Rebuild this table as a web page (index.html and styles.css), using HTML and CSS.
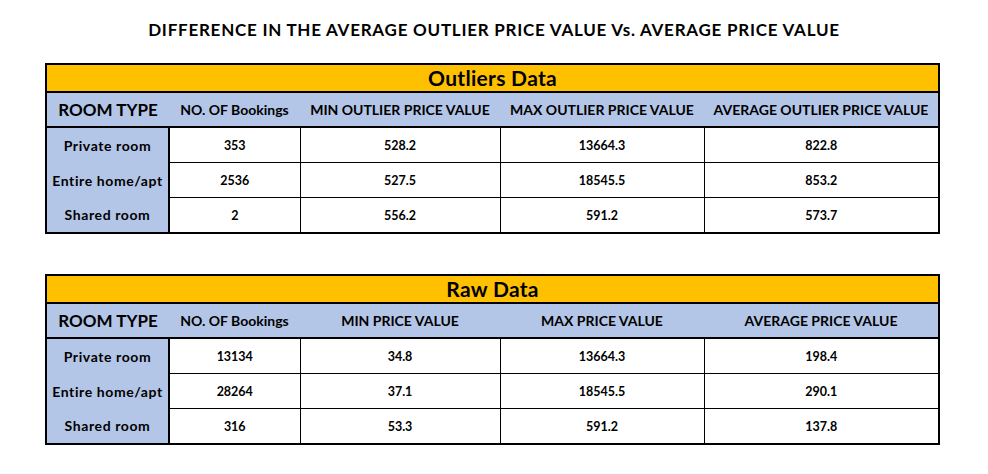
FILE: index.html
```html
<!DOCTYPE html>
<html>
<head>
<meta charset="utf-8">
<link rel="stylesheet" href="styles.css">
</head>
<body>
<div class="page">
  <h1 class="title">DIFFERENCE IN THE AVERAGE OUTLIER PRICE VALUE Vs. AVERAGE PRICE VALUE</h1>

  <table class="data">
    <colgroup>
      <col class="c1"><col class="c2"><col class="c3"><col class="c4"><col class="c5">
    </colgroup>
    <thead>
      <tr class="band"><th colspan="5">Outliers Data</th></tr>
      <tr class="head">
        <th class="rt">ROOM TYPE</th>
        <th>NO. OF Bookings</th>
        <th>MIN OUTLIER PRICE VALUE</th>
        <th>MAX OUTLIER PRICE VALUE</th>
        <th>AVERAGE OUTLIER PRICE VALUE</th>
      </tr>
    </thead>
    <tbody>
      <tr><th>Private room</th><td>353</td><td>528.2</td><td>13664.3</td><td>822.8</td></tr>
      <tr><th>Entire home/apt</th><td>2536</td><td>527.5</td><td>18545.5</td><td>853.2</td></tr>
      <tr><th>Shared room</th><td>2</td><td>556.2</td><td>591.2</td><td>573.7</td></tr>
    </tbody>
  </table>

  <table class="data">
    <colgroup>
      <col class="c1"><col class="c2"><col class="c3"><col class="c4"><col class="c5">
    </colgroup>
    <thead>
      <tr class="band"><th colspan="5">Raw Data</th></tr>
      <tr class="head">
        <th class="rt">ROOM TYPE</th>
        <th>NO. OF Bookings</th>
        <th>MIN PRICE VALUE</th>
        <th>MAX PRICE VALUE</th>
        <th>AVERAGE PRICE VALUE</th>
      </tr>
    </thead>
    <tbody>
      <tr><th>Private room</th><td>13134</td><td>34.8</td><td>13664.3</td><td>198.4</td></tr>
      <tr><th>Entire home/apt</th><td>28264</td><td>37.1</td><td>18545.5</td><td>290.1</td></tr>
      <tr><th>Shared room</th><td>316</td><td>53.3</td><td>591.2</td><td>137.8</td></tr>
    </tbody>
  </table>
</div>
</body>
</html>
```
FILE: styles.css
```css
html, body {
  margin: 0;
  padding: 0;
  background: #ffffff;
}

.page {
  width: 988px;
  padding-top: 20px;
  font-family: Lato, "Liberation Sans", sans-serif;
  color: #000;
}

.title {
  margin: 0 0 23px 0;
  font-size: 17px;
  line-height: 20px;
  font-weight: 700;
  text-align: center;
  letter-spacing: 0.75px;
}

.data {
  margin-left: 45px;
  width: 893px;
  table-layout: fixed;
  border-collapse: collapse;
  border: 2px solid #000;
  margin-bottom: 40px;
}

.c1 { width: 123px; }
.c2 { width: 131px; }
.c3 { width: 200px; }
.c4 { width: 204px; }
.c5 { width: 235px; }

.data th,
.data td {
  padding: 0;
  text-align: center;
  vertical-align: middle;
  font-weight: 700;
  white-space: nowrap;
}

.band th {
  background: #ffc000;
  height: 26px;
  font-size: 21px;
  line-height: 26px;
  letter-spacing: 0.3px;
  border-bottom: 2px solid #000;
}

.head th {
  background: #b4c6e7;
  height: 33px;
  font-size: 14px;
  border-bottom: 2px solid #000;
}

.head th.rt {
  font-size: 17px;
}

.data tbody th {
  background: #b4c6e7;
  height: 34px;
  font-size: 14px;
  letter-spacing: 0.6px;
  border-right: 2px solid #000;
}

.data tbody td {
  background: #fff;
  height: 34px;
  font-size: 12.5px;
  border: 1px solid #000;
}
```
